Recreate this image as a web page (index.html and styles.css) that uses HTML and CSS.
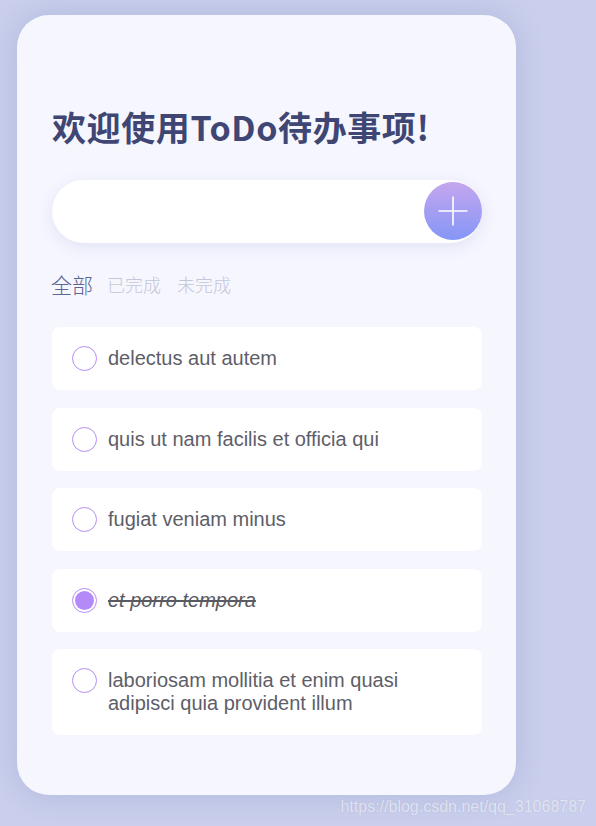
FILE: index.html
```html
<!DOCTYPE html>
<html lang="zh-CN">
<head>
    <meta charset="UTF-8">
    <meta name="viewport" content="width=device-width, initial-scale=1.0">
    <title>ToDo待办事项</title>
    <link rel="stylesheet" href="styles.css">
</head>
<body>
    <div class="todo-card">
        <h1 class="title">欢迎使用ToDo待办事项!</h1>

        <div class="add-box">
            <input type="text" class="add-input">
            <button class="add-btn" aria-label="添加">
                <svg width="30" height="30" viewBox="0 0 30 30">
                    <path d="M15 0.5 V29.5 M0.5 15 H29.5" stroke="#fff" stroke-width="1.6" fill="none"/>
                </svg>
            </button>
        </div>

        <div class="tabs">
            <span class="tab active">全部</span>
            <span class="tab">已完成</span>
            <span class="tab">未完成</span>
        </div>

        <ul class="todo-list">
            <li class="todo-item">
                <span class="check"></span>
                <span class="todo-text">delectus aut autem</span>
            </li>
            <li class="todo-item">
                <span class="check"></span>
                <span class="todo-text">quis ut nam facilis et officia qui</span>
            </li>
            <li class="todo-item">
                <span class="check"></span>
                <span class="todo-text">fugiat veniam minus</span>
            </li>
            <li class="todo-item done">
                <span class="check"></span>
                <span class="todo-text">et porro tempora</span>
            </li>
            <li class="todo-item">
                <span class="check"></span>
                <span class="todo-text">laboriosam mollitia et enim quasi adipisci quia provident illum</span>
            </li>
        </ul>
    </div>

    <div class="watermark">https://blog.csdn.net/qq_31068787</div>
</body>
</html>
```

FILE: styles.css
```css
body {
    margin: 0;
    padding: 15px 0 0 17px;
    background-color: #c9cfec;
    font-family: "Liberation Sans", Arial, "Noto Sans CJK SC", sans-serif;
    height: 826px;
    box-sizing: border-box;
    overflow: hidden;
}

.todo-card {
    width: 499px;
    height: 780px;
    box-sizing: border-box;
    padding: 91px 34px 0 35px;
    background-color: #f5f6fe;
    border-radius: 32px;
    box-shadow: 0 0 30px rgba(70, 80, 150, 0.18);
}

.title {
    margin: 0;
    font-family: "Noto Sans CJK SC", sans-serif;
    font-size: 34px;
    line-height: 42px;
    font-weight: bold;
    color: #3f4673;
    letter-spacing: 0.6px;
}

.add-box {
    position: relative;
    margin-top: 32px;
    height: 63px;
    background-color: #fff;
    border-radius: 32px;
    box-shadow: 0 4px 16px rgba(90, 100, 170, 0.12);
}

.add-input {
    width: 100%;
    height: 100%;
    box-sizing: border-box;
    padding: 0 80px 0 24px;
    border: none;
    outline: none;
    background: transparent;
    font-size: 18px;
}

.add-btn {
    position: absolute;
    top: 2px;
    right: 0;
    width: 58px;
    height: 58px;
    border: none;
    border-radius: 50%;
    padding: 0;
    background: linear-gradient(to bottom, #c4a6ee, #8596f7);
    display: flex;
    align-items: center;
    justify-content: center;
    cursor: pointer;
}

.add-btn svg {
    display: block;
}

.tabs {
    margin-top: 29px;
    height: 24px;
    display: flex;
    align-items: center;
    font-family: "Noto Sans CJK SC", sans-serif;
    font-weight: 300;
}

.tab {
    font-size: 18px;
    color: #c5c6d8;
    margin-right: 16px;
    cursor: pointer;
}

.tab.active {
    font-size: 21px;
    color: #5d6393;
    margin-right: 14px;
    margin-left: -1px;
}

.todo-list {
    list-style: none;
    margin: 31px 0 0;
    padding: 0;
    display: flex;
    flex-direction: column;
    gap: 17.5px;
}

.todo-item {
    display: flex;
    align-items: flex-start;
    padding: 19px 20px;
    background-color: #fff;
    border-radius: 8px;
}

.check {
    flex: none;
    width: 25px;
    height: 25px;
    box-sizing: border-box;
    border: 1px solid #b78cf6;
    border-radius: 50%;
    margin-right: 11px;
    background-clip: content-box;
}

.todo-item.done .check {
    padding: 2px;
    border-width: 1.5px;
    background-color: #b38af7;
}

.todo-text {
    padding: 1px 0;
    font-size: 20px;
    line-height: 23px;
    color: #5e5e68;
}

.todo-item.done .todo-text {
    font-style: italic;
    text-decoration: line-through;
    text-decoration-thickness: 2px;
    color: #5a5a62;
}

.watermark {
    width: 569px;
    margin-top: 2px;
    text-align: right;
    font-size: 16px;
    line-height: 20px;
    color: rgba(255, 255, 255, 0.65);
    text-shadow: 0 0 1px rgba(120, 130, 180, 0.4);
}
```
